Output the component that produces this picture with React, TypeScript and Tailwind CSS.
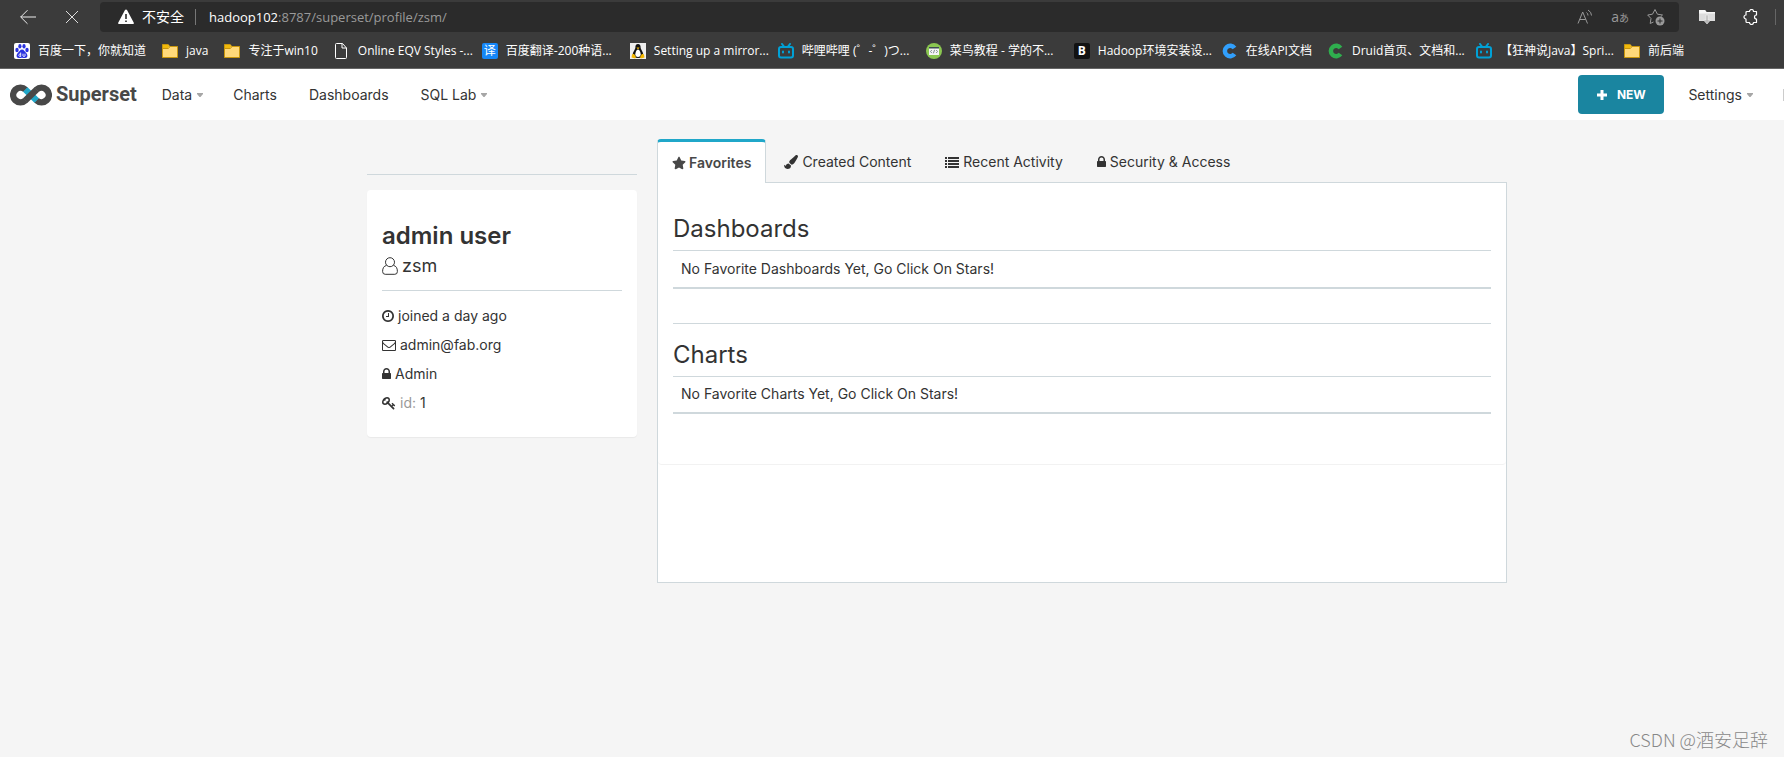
import type { ReactNode } from "react";
import { FaPaintBrush, FaStar } from "react-icons/fa";

// Font Awesome 4 glyphs on their 1792 grid
const GLYPHS = {
  lock: "M640 768h512v-192q0-106-75-181t-181-75-181 75-75 181v192zm832 96v576q0 40-28 68t-68 28h-960q-40 0-68-28t-28-68v-576q0-40 28-68t68-28h32v-192q0-184 132-316t316-132 316 132 132 316v192h32q40 0 68 28t28 68z",
  clock:
    "M1024 544v448q0 14-9 23t-23 9h-320q-14 0-23-9t-9-23v-64q0-14 9-23t23-9h224v-352q0-14 9-23t23-9h64q14 0 23 9t9 23zm416 352q0-148-73-273t-198-198-273-73-273 73-198 198-73 273 73 273 198 198 273 73 273-73 198-198 73-273zm224 0q0 209-103 385.5t-279.5 279.5-385.5 103-385.5-103-279.5-279.5-103-385.5 103-385.5 279.5-279.5 385.5-103 385.5 103 279.5 279.5 103 385.5z",
  envelope:
    "M1664 1504v-768q-32 36-69 66-268 206-426 338-51 43-83 67t-86.5 48.5-102.5 24.5h-2q-48 0-102.5-24.5t-86.5-48.5-83-67q-158-132-426-338-37-30-69-66v768q0 13 9.5 22.5t22.5 9.5h1472q13 0 22.5-9.5t9.5-22.5zm0-1051v-24.5l-.5-13-3-12.5-5.5-9-9-7.5-14-2.5h-1472q-13 0-22.5 9.5t-9.5 22.5q0 168 147 284 193 152 401 317 6 5 35 29.5t46 37.5 44.5 31.5 50.5 27.5 43 9h2q20 0 43-9t50.5-27.5 44.5-31.5 46-37.5 35-29.5q208-165 401-317 54-43 100.5-115.5t46.5-131.5zm128-37v1088q0 66-47 113t-113 47h-1472q-66 0-113-47t-47-113v-1088q0-66 47-113t113-47h1472q66 0 113 47t47 113z",
  key: "M832 512q0-80-56-136t-136-56-136 56-56 136q0 42 19 83-41-19-83-19-80 0-136 56t-56 136 56 136 136 56 136-56 56-136q0-42-19-83 41 19 83 19 80 0 136-56t56-136zm851 704q0 17-49 66t-66 49q-9 0-28.5-16t-36.5-33-38.5-40-24.5-26l-96 96 220 220q28 28 28 68 0 42-39 81t-81 39q-40 0-68-28l-671-671q-176 131-365 131-163 0-265.5-102.5t-102.5-265.5q0-160 95-313t248-248 313-95q163 0 265.5 102.5t102.5 265.5q0 189-131 365l355 355 96-96q-3-3-26-24.5t-40-38.5-33-36.5-16-28.5q0-17 49-66t66-49q13 0 23 10 6 6 46 44.5t82 79.5 86.5 86 73 78 28.5 41z",
};

function Glyph({ name, viewBox = "0 0 1792 1792", className = "w-[14px] h-[14px]" }: { name: keyof typeof GLYPHS; viewBox?: string; className?: string }) {
  return (
    <svg viewBox={viewBox} className={className} fill="currentColor" aria-hidden="true">
      <path d={GLYPHS[name]} />
    </svg>
  );
}

function LockIcon() {
  return <Glyph name="lock" viewBox="320 0 1152 1792" className="w-[9px] h-[14px]" />;
}

function FolderIcon() {
  return (
    <svg viewBox="0 0 16 16" className="w-4 h-4 shrink-0">
      <path d="M.5 1.5h5.7l1.6 2h7.7v11H.5z" fill="#ffd97a" stroke="#c8960c" />
      <path d="M1 2h5l1.3 1.6L6 5H1z" fill="#f0b90b" />
      <path d="M1 5.5h5.4l1.6-2" fill="none" stroke="#c8960c" />
    </svg>
  );
}

function BilibiliIcon() {
  return (
    <svg viewBox="0 0 16 16" className="w-4 h-4 shrink-0" fill="none" stroke="#00a1d6" strokeWidth="2" strokeLinecap="round">
      <path d="M4 1l2 2.5M12 1l-2 2.5" />
      <rect x="1" y="4" width="14" height="10.5" rx="2" />
      <path d="M5 8.5v1M11 8.5v1" />
    </svg>
  );
}

function BaiduIcon() {
  return (
    <svg viewBox="0 0 16 16" className="w-4 h-4 shrink-0">
      <rect width="16" height="16" rx="2" fill="#fff" />
      <g fill="#2a32e0">
        <ellipse cx="3" cy="7" rx="1.7" ry="2.2" />
        <ellipse cx="5.9" cy="3.3" rx="1.6" ry="2.2" />
        <ellipse cx="10" cy="3.3" rx="1.6" ry="2.2" />
        <ellipse cx="13" cy="7" rx="1.7" ry="2.2" />
        <path d="M8 6.5c2 0 2.5 2 4.2 3.6 2 2 1.4 5-1 5-1.2 0-2-.3-3.2-.3s-2 .3-3.2.3c-2.4 0-3-3-1-5C5.5 8.5 6 6.5 8 6.5z" />
      </g>
      <path d="M6.7 9.5v4M6.7 11.2c-2-.8-2.5 2-.8 2.3h.8M9 10.7v2.2c0 .7 2 .7 2 0v-2.2" fill="none" stroke="#fff" strokeWidth=".9" />
    </svg>
  );
}

function PageIcon() {
  return (
    <svg viewBox="0 0 16 16" className="w-4 h-4 shrink-0" fill="none" stroke="#fff" strokeLinejoin="round">
      <path d="M2.5.5h6L12.5 5v9.500q0 1-1 1h-9q-1 0-1-1v-13q0-1 1-1zM8 .5V5h4.500" />
    </svg>
  );
}

function TuxIcon() {
  return (
    <svg viewBox="0 0 16 16" className="w-4 h-4 shrink-0">
      <rect width="16" height="16" fill="#eee" />
      <path d="M8 1c2 0 2.6 1.5 2.6 3.5 0 2 3 4.5 2.7 8-.2 1.5-2 2.5-5.3 2.5s-5.100-1-5.300-2.500C2.500 9 5.400 6.500 5.400 4.500 5.400 2.500 6 1 8 1z" fill="#111" />
      <path d="M8 6.500c1.500 0 2.700 3 2.700 5 0 1.500-1 2.500-2.700 2.500s-2.700-1-2.700-2.500c0-2 1.200-5 2.700-5z" fill="#fff" />
      <path d="M6.500 4.500h3L8 6.500z" fill="#f5b800" />
      <path d="M2 11.500l2-.8 2 3.300-.8 1.500L1.500 14.500zM14 11.500l-2-.8-2 3.300.8 1.500 3.700-1z" fill="#f5b800" />
    </svg>
  );
}

function RunoobIcon() {
  return (
    <svg viewBox="0 0 16 16" className="w-4 h-4 shrink-0">
      <circle cx="8" cy="8" r="8" fill="#8bc751" />
      <rect x="3" y="4" width="10" height="8" fill="#f4f4f4" />
      <rect x="3" y="4" width="10" height="1.5" fill="#3d4c53" />
      <path d="M5.8 7L4.5 8.5l1.3 1.5M10.200 7l1.300 1.500-1.300 1.500M8.600 6.800l-1.200 3.500" fill="none" stroke="#66757c" strokeWidth=".8" />
    </svg>
  );
}

function LetterIcon({ letter, className }: { letter: string; className: string }) {
  return (
    <span className={`w-4 h-4 shrink-0 rounded-xs flex items-center justify-center text-white leading-none ${className}`}>
      {letter}
    </span>
  );
}

function CIcon({ color }: { color: string }) {
  return (
    <svg viewBox="0 0 16 16" className="w-4 h-4 shrink-0" fill="none" stroke={color}>
      <path d="M12.5 5A5.3 5.2 0 1 0 12.5 11" strokeWidth="4.5" />
    </svg>
  );
}

const bookmarks: { icon: ReactNode; label: string; truncated?: boolean }[] = [
  { icon: <BaiduIcon />, label: "百度一下，你就知道" },
  { icon: <FolderIcon />, label: "java" },
  { icon: <FolderIcon />, label: "专注于win10" },
  { icon: <PageIcon />, label: "Online EQV Styles -...", truncated: true },
  { icon: <LetterIcon letter="译" className="bg-[#1687f8] text-[12px]" />, label: "百度翻译-200种语...", truncated: true },
  { icon: <TuxIcon />, label: "Setting up a mirror...", truncated: true },
  { icon: <BilibiliIcon />, label: "哔哩哔哩 (゜-゜)つ...", truncated: true },
  { icon: <RunoobIcon />, label: "菜鸟教程 - 学的不...", truncated: true },
  { icon: <LetterIcon letter="B" className="bg-[#121212] text-[12px] font-bold" />, label: "Hadoop环境安装设...", truncated: true },
  { icon: <CIcon color="#319ffc" />, label: "在线API文档" },
  { icon: <CIcon color="#2fae4e" />, label: "Druid首页、文档和...", truncated: true },
  { icon: <BilibiliIcon />, label: "【狂神说Java】Spri...", truncated: true },
  { icon: <FolderIcon />, label: "前后端" },
];

function BrowserChrome() {
  return (
    <div className="bg-[#3b3b3b] border-b border-[#666] font-['Open_Sans','Noto_Sans_CJK_SC',sans-serif] text-white">
      <div className="flex items-center h-[34px]">
        <button aria-label="Back" className="ml-5 w-4 h-4">
          <svg viewBox="0 0 16 16" className="w-4 h-4" fill="none" stroke="#eee">
            <path d="M16 8H.7M7.5 1.2L.7 8l6.8 6.8" />
          </svg>
        </button>
        <button aria-label="Stop" className="ml-7 w-4 h-4">
          <svg viewBox="0 0 16 16" className="w-4 h-4" fill="none" stroke="#ddd">
            <path d="M2 2l12 12M14 2L2 14" />
          </svg>
        </button>
        <div className="ml-5 flex-1 h-[30px] rounded bg-[#2b2b2b] flex items-center pl-[18px] pr-[14px]">
          <svg viewBox="0 0 16 16" className="w-4 h-4" fill="#fff">
            <path d="M8 .5q.7 0 1 .6l6.800 12.700q.5 1.200-.8 1.200H1q-1.300 0-.8-1.200L7 1.100q.3-.6 1-.6z" />
            <path d="M8 5v5M8 11.500v1.500" stroke="#2b2b2b" strokeWidth="1.6" />
          </svg>
          <span className="ml-2 text-sm">不安全</span>
          <span className="ml-[11px] w-px h-4 bg-[#777]" />
          <span className="ml-[13px] text-[13px] text-[#9a9a9a]">
            <span className="text-white">hadoop102</span>:8787/superset/profile/zsm/
          </span>
          <div className="ml-auto flex items-center gap-[18px] text-[#999]">
            <button aria-label="Read aloud" className="flex">
              <svg viewBox="0 0 16 16" className="w-4 h-4" fill="none" stroke="currentColor">
                <path d="M1 14.500L5.700 3l4.800 11.500M2.700 10.500h6M9.500 3.500q1.500 1 1.500 3M11 1q3.500 2 3.500 5.500" />
              </svg>
            </button>
            <button aria-label="Translate" className="text-[14px] leading-4">
              a<span className="text-[10px]">あ</span>
            </button>
            <button aria-label="Add to favorites" className="flex">
              <svg viewBox="0 0 18 18" className="w-[18px] h-[18px]" fill="none" stroke="currentColor" strokeLinejoin="round">
                <path d="M6.500 14L3.200 15.500 4 10.500.7 7l4.800-.8L8 1.500l2.400 4.700 5.100.8-1.800 1.800" />
                <circle cx="13" cy="13" r="4.5" fill="currentColor" stroke="none" />
                <path d="M13 10.500v5M10.500 13h5" stroke="#2b2b2b" />
              </svg>
            </button>
          </div>
        </div>
        <button aria-label="Downloads" className="ml-5 w-4 h-4">
          <svg viewBox="0 0 16 16" className="w-4 h-4">
            <path d="M0 1h6l1.500 2H16v9H0z" fill="#dcdcdc" />
            <path d="M0 1h6l1.500 2H16v1.500H0z" fill="#f6f6f6" />
            <path d="M7 6h2v5h2.500L8 15l-3.500-4H7z" fill="#b5b5b5" stroke="#eee" strokeWidth=".6" />
          </svg>
        </button>
        <button aria-label="Extensions" className="ml-7 w-4 h-4">
          <svg viewBox="0 0 16 16" className="w-4 h-4" fill="none" stroke="#fff" strokeWidth="1.2" strokeLinejoin="round">
            <path d="M4 2.500h2.500a2 2 0 0 1 4 0h3V6a2 2 0 0 0 0 4v3.500h-3a2 2 0 0 1-4 0H4q-1 0-1-1V10a2 2 0 0 1 0-4V3.500q0-1 1-1z" />
          </svg>
        </button>
        <span className="ml-4 mr-2 w-px h-4 bg-[#666]" />
      </div>

      <nav aria-label="Bookmarks" className="flex items-center h-[34px] pl-[14px] gap-4 overflow-hidden">
        {bookmarks.map((item) => (
          <a key={item.label} href="#" className="flex items-center gap-2 shrink-0 text-xs whitespace-nowrap">
            {item.icon}
            <span className={item.truncated ? "w-[108px]" : ""}>{item.label}</span>
          </a>
        ))}
      </nav>
    </div>
  );
}

function Logo() {
  return (
    <a href="#" className="flex items-center gap-1" aria-label="Superset">
      <svg viewBox="0 0 42 22" className="w-[42px] h-[22px]" fill="none" strokeWidth="6.5">
        <path d="M15.600 5.800A7.300 7.300 0 1 0 15.600 16.200M26.400 5.800A7.300 7.300 0 1 1 26.400 16.200" stroke="#484848" />
        <path d="M15.300 5.500L26.700 16.500" stroke="#20a7c9" />
        <path d="M15.300 16.500L26.700 5.500" stroke="#484848" />
      </svg>
      <span className="font-[Roboto] font-bold text-[20px] text-[#484848]">Superset</span>
    </a>
  );
}

function Caret() {
  return (
    <svg viewBox="0 0 6 4" className="w-[6px] h-1" fill="#a6a6a6">
      <path d="M0 0h6v1L3.5 4h-1L0 1z" />
    </svg>
  );
}

function Navbar() {
  return (
    <header className="bg-white h-[51px] flex items-center pl-[10px] overflow-hidden">
      <Logo />
      <nav className="ml-[25px] flex items-center gap-8">
        <button className="flex items-center gap-[5px] -mr-0.5">
          Data <Caret />
        </button>
        <a href="#">Charts</a>
        <a href="#">Dashboards</a>
        <button className="flex items-center gap-[5px]">
          SQL Lab <Caret />
        </button>
      </nav>
      <button className="ml-auto w-[86px] h-[39px] rounded bg-[#1a85a0] text-white text-xs font-bold flex items-center justify-center gap-[10px]">
        <svg viewBox="0 0 10 10" className="w-[10px] h-[10px]" fill="none" stroke="currentColor" strokeWidth="3">
          <path d="M5 0v10M0 5h10" />
        </svg>
        NEW
      </button>
      <button className="ml-6 flex items-center gap-[5px]">
        Settings <Caret />
      </button>
      <span className="ml-[30px] w-px h-3 bg-[#ccc]" />
    </header>
  );
}

function ProfileCard() {
  return (
    <aside className="w-[270px] shrink-0 pt-[35px]">
      <hr className="border-[#cfd8dc]" />
      <section className="mt-[15px] h-[247px] rounded bg-white shadow-[0_1px_1px_rgba(0,0,0,0.05)] px-[15px] pt-8">
        <h1 className="text-2xl leading-7 font-semibold">admin user</h1>
        <p className="flex items-center gap-1 text-lg leading-8">
          <svg viewBox="0 0 16 18" className="w-4 h-[18px]" fill="none" stroke="currentColor">
            <circle cx="8" cy="5.2" r="4.5" />
            <path d="M4.500 8.500C2 8.800.6 11 .6 14.500q0 2.800 2.600 2.800h9.600q2.600 0 2.600-2.800c0-3.500-1.400-5.700-3.900-6" />
          </svg>
          zsm
        </p>
        <hr className="mt-2 border-[#cfd8dc]" />
        <ul className="mt-[10px] leading-[29px]">
          <li className="flex items-center gap-1">
            <Glyph name="clock" viewBox="128 128 1536 1536" className="w-3 h-3" /> joined a day ago
          </li>
          <li className="flex items-center gap-1">
            <Glyph name="envelope" /> admin@fab.org
          </li>
          <li className="flex items-center gap-1">
            <LockIcon /> Admin
          </li>
          <li className="flex items-center gap-1">
            <Glyph name="key" />
            <span>
              <span className="text-[#999]">id:</span> 1
            </span>
          </li>
        </ul>
      </section>
    </aside>
  );
}

function FavoriteList({ title, message }: { title: string; message: string }) {
  return (
    <section>
      <h2 className="text-2xl leading-8">{title}</h2>
      <table className="mt-[5px] w-full border-t border-b-2 border-[#cfd8dc]">
        <tbody>
          <tr>
            <td className="h-[37px] px-2">{message}</td>
          </tr>
        </tbody>
      </table>
    </section>
  );
}

const tabs = [
  { label: "Created Content", icon: <FaPaintBrush className="w-[14px] h-[14px]" /> },
  {
    label: "Recent Activity",
    icon: (
      <svg viewBox="0 0 14 12" className="w-[14px] h-3" fill="currentColor">
        <path d="M0 1h2v2H0zM3 1h11v2H3zM0 4h2v2H0zM3 4h11v2H3zM0 7h2v2H0zM3 7h11v2H3zM0 10h2v2H0zM3 10h11v2H3z" />
      </svg>
    ),
  },
  { label: "Security & Access", icon: <LockIcon /> },
];

function ProfileTabs() {
  return (
    <section className="flex-1 min-w-0">
      <div role="tablist" className="flex h-[43px]">
        <button
          role="tab"
          aria-selected="true"
          className="relative z-10 -mb-px flex items-center gap-[3px] px-[14px] rounded-t-sm border-x border-t-[3px] border-x-[#cfd8dc] border-t-[#20a7c9] bg-white font-semibold text-[#484848]"
        >
          <FaStar className="w-[14px] h-[14px]" />
          Favorites
        </button>
        {tabs.map((tab) => (
          <button key={tab.label} role="tab" aria-selected="false" className="flex items-center gap-1 pt-[3px] pl-[18px] pr-4">
            {tab.icon}
            {tab.label}
          </button>
        ))}
      </div>
      <div role="tabpanel" className="bg-white border border-[#cfd8dc] h-[401px]">
        <div className="rounded-b px-[15px] pt-[30px] pb-[50px] border-b border-[#f2f2f2]">
          <FavoriteList title="Dashboards" message="No Favorite Dashboards Yet, Go Click On Stars!" />
          <hr className="mt-[34px] mb-[15px] border-[#cfd8dc]" />
          <FavoriteList title="Charts" message="No Favorite Charts Yet, Go Click On Stars!" />
        </div>
      </div>
    </section>
  );
}

export default function App() {
  return (
    <div className="relative min-h-screen bg-[#f5f5f5] font-[Inter,sans-serif] text-sm text-[#333]">
      <BrowserChrome />
      <Navbar />
      <main className="pl-[90px] pt-[19px]">
        <div className="max-w-[1140px] mx-auto flex items-start gap-5">
          <ProfileCard />
          <ProfileTabs />
        </div>
      </main>
      <p className="absolute right-4 bottom-1 font-['Noto_Sans_CJK_SC',sans-serif] font-light text-lg text-[#888]">
        CSDN @酒安足辞
      </p>
    </div>
  );
}
